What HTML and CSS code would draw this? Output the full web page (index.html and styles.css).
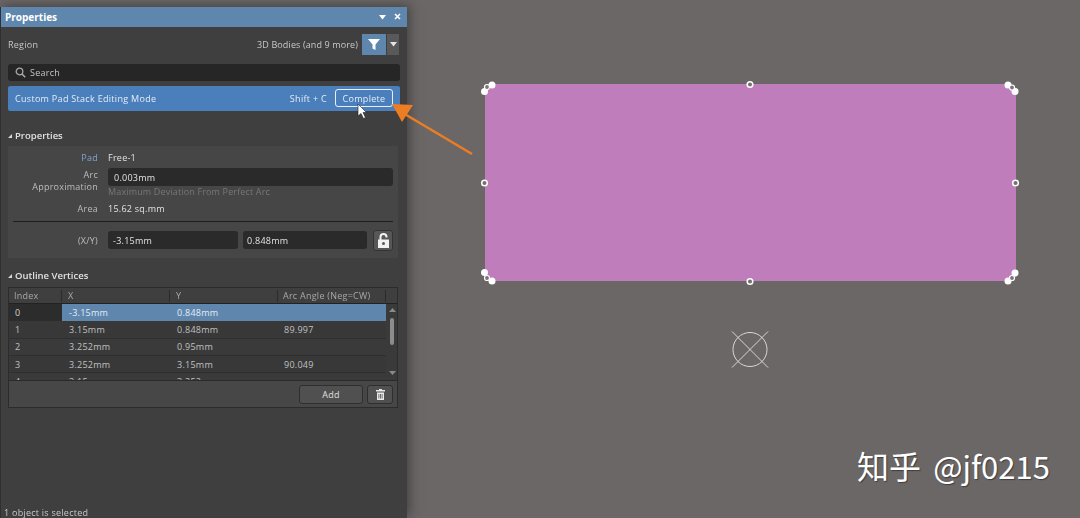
FILE: index.html
```html
<!DOCTYPE html>
<html lang="en">
<head>
<meta charset="utf-8">
<title>Properties</title>
<link rel="stylesheet" href="styles.css">
</head>
<body>
<main class="canvas">
  <div class="pad"></div>
  <svg class="overlay" width="1080" height="518" viewBox="0 0 1080 518">
    <g class="corners">
      <circle cx="492" cy="85" r="3.500"/><circle cx="484.500" cy="91.500" r="3.500"/><circle class="ring" cx="487" cy="87" r="2.500"/>
      <circle cx="1008" cy="85" r="3.500"/><circle cx="1015" cy="91.500" r="3.500"/><circle class="ring" cx="1012" cy="87.500" r="2.500"/>
      <circle cx="484.500" cy="272.500" r="3.500"/><circle cx="492" cy="281" r="3.500"/><circle class="ring" cx="487" cy="278" r="2.500"/>
      <circle cx="1015" cy="273" r="3.500"/><circle cx="1008" cy="281" r="3.500"/><circle class="ring" cx="1012" cy="278" r="2.500"/>
    </g>
    <g class="handles">
      <circle cx="750" cy="84.500" r="2.800"/><circle cx="750" cy="281.500" r="2.800"/>
      <circle cx="484.500" cy="183" r="2.800"/><circle cx="1015.500" cy="183" r="2.800"/>
    </g>
    <g class="origin">
      <circle cx="750" cy="349.500" r="17"/>
      <path d="M732 331.500L768 367.500M768 331.500L732 367.500"/>
    </g>
  </svg>
  <div class="watermark">知乎 <span class="wm-latin">@jf0215</span></div>
</main>

<section class="panel">
  <header class="titlebar">
    <span class="title">Properties</span>
    <span class="window-tools">
      <svg width="7" height="6" viewBox="0 0 7 6"><path d="M0 1h7L3.500 5.500z" fill="#fff"/></svg>
      <svg width="7" height="7" viewBox="0 0 7 7"><path d="M1 1l5 5M6 1l-5 5" stroke="#fff" stroke-width="1.600"/></svg>
    </span>
  </header>

  <div class="region-row">
    <span>Region</span>
    <span class="region-filter">
      <span class="filter-text">3D Bodies (and 9 more)</span>
      <span class="filter-btn"><svg width="12" height="11" viewBox="0 0 12 11"><path d="M0 0h12L7.500 5.500V11L4.500 9.500V5.500z" fill="#fff"/></svg></span>
      <span class="filter-drop"><svg width="7" height="5" viewBox="0 0 7 5"><path d="M0 0h7L3.500 4.500z" fill="#e4e4e4"/></svg></span>
    </span>
  </div>

  <div class="search">
    <svg width="11" height="11" viewBox="0 0 11 11"><circle cx="4.500" cy="4.500" r="3.300" fill="none" stroke="#a8a8a8" stroke-width="1.300"/><path d="M7 7l3.200 3.200" stroke="#a8a8a8" stroke-width="1.600"/></svg>
    <span>Search</span>
  </div>

  <div class="mode-bar">
    <span>Custom Pad Stack Editing Mode</span>
    <span class="mode-right">
      <span>Shift + C</span>
      <span class="complete">Complete</span>
    </span>
  </div>

  <h2 class="section-head"><i class="tri"></i>Properties</h2>
  <div class="props">
    <div class="prop-row pad-row"><span class="label link">Pad</span><span class="value">Free-1</span></div>
    <div class="prop-row arc-row">
      <span class="label two">Arc<br>Approximation</span>
      <div class="field-col">
        <span class="input">0.003mm</span>
        <span class="hint">Maximum Deviation From Perfect Arc</span>
      </div>
    </div>
    <div class="prop-row area-row"><span class="label">Area</span><span class="value">15.62 sq.mm</span></div>
    <div class="divider"></div>
    <div class="prop-row xy-row">
      <span class="label">(X/Y)</span>
      <span class="input x">-3.15mm</span>
      <span class="input y">0.848mm</span>
      <span class="lock"><svg width="11" height="15" viewBox="0 0 11 15"><path d="M2.500 7V4a3 3 0 0 1 6 0v.5" fill="none" stroke="#f2f2f2" stroke-width="2"/><path fill-rule="evenodd" d="M0 6.500h11V15H0zM5.500 9a1.500 1.500 0 1 0 0 3 1.500 1.500 0 0 0 0-3z" fill="#f2f2f2"/></svg></span>
    </div>
  </div>

  <h2 class="section-head outline"><i class="tri"></i>Outline Vertices</h2>
  <div class="table">
    <div class="thead">
      <span class="c0">Index</span><span class="c1">X</span><span class="c2">Y</span><span class="c3">Arc Angle (Neg=CW)</span>
    </div>
    <div class="tbody">
      <div class="rows">
        <div class="row selected"><span class="c0">0</span><span class="c1">-3.15mm</span><span class="c2">0.848mm</span><span class="c3"></span></div>
        <div class="row"><span class="c0">1</span><span class="c1">3.15mm</span><span class="c2">0.848mm</span><span class="c3">89.997</span></div>
        <div class="row"><span class="c0">2</span><span class="c1">3.252mm</span><span class="c2">0.95mm</span><span class="c3"></span></div>
        <div class="row"><span class="c0">3</span><span class="c1">3.252mm</span><span class="c2">3.15mm</span><span class="c3">90.049</span></div>
        <div class="row"><span class="c0">4</span><span class="c1">3.15mm</span><span class="c2">3.252mm</span><span class="c3"></span></div>
      </div>
      <div class="scrollbar">
        <svg class="up" width="7" height="4" viewBox="0 0 7 4"><path d="M0 4h7L3.500 0z" fill="#8a8a8a"/></svg>
        <span class="thumb"></span>
        <svg class="down" width="7" height="4" viewBox="0 0 7 4"><path d="M0 0h7L3.500 4z" fill="#8a8a8a"/></svg>
      </div>
    </div>
    <div class="tfoot">
      <span class="btn add">Add</span>
      <span class="btn trash"><svg width="9" height="11" viewBox="0 0 9 11"><path fill="#e8e8e8" d="M3 0h3v1h3v1.500H0V1h3zM1 3.500h7V11H1zM2.500 5v4.500h.8V5zm1.600 0v4.500h.8V5zm1.600 0v4.500h.8V5z" fill-rule="evenodd"/></svg></span>
    </div>
  </div>

  <div class="status">1 object is selected</div>
</section>

<svg class="pointer" width="1080" height="518" viewBox="0 0 1080 518">
  <path class="arrow-line" d="M472 154L403 113"/>
  <path class="arrow-head" d="M392 104L413 105L402 122z"/>
  <path class="cursor" d="M358 104V116L361 113.500L363.500 118.500L365.500 117.500L363 112.500H366.500z"/>
</svg>
</body>
</html>
```

FILE: styles.css
```css
* { box-sizing: border-box; }
html, body { margin: 0; height: 100%; overflow: hidden; }
body {
  width: 1080px;
  height: 518px;
  position: relative;
  background: #6b6766;
  font-family: "Open Sans", "Noto Sans", sans-serif;
  font-size: 9px;
  letter-spacing: .25px;
  color: #d0d0d0;
}
.canvas { position: absolute; inset: 0; }
.pad {
  position: absolute;
  left: 485px;
  top: 84px;
  width: 531px;
  height: 197px;
  background: #bf7dbb;
  border-radius: 6px;
}
.overlay, .pointer { position: absolute; left: 0; top: 0; }
.handles circle { fill: #77706f; stroke: #fff; stroke-width: 1.500; }
.corners circle { fill: #fff; }
.corners .ring { fill: #7d7478; stroke: #fff; stroke-width: 1.200; }
.origin { fill: none; stroke: #d8d6d6; stroke-width: 1; }
.watermark {
  position: absolute;
  left: 857px;
  top: 444px;
  font-family: "Noto Sans CJK SC", "Noto Sans", sans-serif;
  font-size: 32px;
  line-height: 42px;
  letter-spacing: 0;
  word-spacing: 5px;
  color: #fff;
  white-space: nowrap;
  text-shadow: 1px 1px 1px #3f3f3f;
}
.wm-latin { font-size: 31px; }

.panel {
  position: absolute;
  left: 0;
  top: 7px;
  width: 407px;
  height: 511px;
  background: #3f3f3f;
  border-left: 1px solid #303030;
  box-shadow: 3px -2px 10px rgba(40, 40, 40, .55);
  display: flex;
  flex-direction: column;
  filter: blur(.3px);
}
.titlebar {
  height: 20px;
  flex: none;
  background: #5f87ae;
  padding: 0 6px 1px 4px;
  display: flex;
  align-items: center;
  justify-content: space-between;
}
.title { color: #fff; font-size: 10px; font-weight: 700; letter-spacing: 0; }
.window-tools { display: flex; gap: 8px; align-items: center; }

.region-row {
  margin-top: 7px;
  height: 21px;
  padding: 0 8px 0 7px;
  display: flex;
  align-items: center;
  justify-content: space-between;
  color: #c8c8c8;
}
.region-filter { display: flex; align-items: center; }
.filter-text { letter-spacing: .12px; }
.filter-btn {
  margin-left: 4px;
  width: 24px;
  height: 21px;
  background: #5f87ae;
  display: flex;
  align-items: center;
  justify-content: center;
}
.filter-drop {
  margin-left: 1px;
  width: 12px;
  height: 21px;
  background: #595959;
  display: flex;
  align-items: center;
  justify-content: center;
}
.search {
  margin: 9px 7px 0 7px;
  height: 17px;
  background: #262626;
  border-radius: 3px;
  padding-left: 7px;
  display: flex;
  align-items: center;
  gap: 4px;
  color: #c4c4c4;
}
.mode-bar {
  margin: 5px 7px 0 7px;
  height: 25px;
  background: #4a7fbc;
  border-radius: 2px;
  padding: 0 7px;
  display: flex;
  align-items: center;
  justify-content: space-between;
  color: #e4ecf5;
  letter-spacing: .3px;
}
.mode-right { display: flex; align-items: center; gap: 8px; }
.complete {
  width: 58px;
  height: 18px;
  border: 1px solid #e6eef7;
  border-radius: 3px;
  display: flex;
  align-items: center;
  justify-content: center;
  margin-top: -1px;
}
.section-head {
  margin: 19px 0 0 7px;
  height: 12px;
  font-size: 9.500px;
  font-weight: 600;
  letter-spacing: 0;
  color: #e2e2e2;
  line-height: 12px;
  display: flex;
  align-items: center;
  gap: 3px;
}
.section-head.outline { margin-top: 12px; }
.tri {
  width: 0;
  height: 0;
  border-left: 4px solid transparent;
  border-bottom: 4px solid #d8d8d8;
}
.props {
  margin: 4px 9px 0 7px;
  height: 112px;
  background: #464646;
  padding-right: 5px;
  display: flex;
  flex-direction: column;
}
.prop-row { display: flex; align-items: center; }
.label { width: 90px; flex: none; text-align: right; color: #bdbdbd; }
.label.link { color: #7ea5cf; }
.label.two { line-height: 12px; }
.value { margin-left: 10px; color: #e2e2e2; }
.pad-row { height: 22px; }
.arc-row { height: 33px; align-items: flex-start; }
.arc-row .label { margin-top: 1px; }
.field-col { margin-left: 10px; flex: 1; display: flex; flex-direction: column; }
.input {
  height: 18px;
  background: #2a2a2a;
  border-radius: 3px;
  padding-left: 5px;
  display: flex;
  align-items: center;
  color: #e2e2e2;
}
.field-col .input { padding-left: 6px; }
.hint { height: 12px; color: #777; line-height: 12px; letter-spacing: .15px; }
.area-row { height: 15px; }
.divider { height: 1px; margin: 5px 0 0 5px; background: #1e1e1e; }
.xy-row { margin-top: 7px; height: 22px; }
.xy-row .input.x { margin-left: 10px; width: 130px; }
.xy-row .input.y { margin-left: 5px; width: 124px; padding-left: 4px; }
.lock {
  margin-left: 6px;
  width: 20px;
  height: 21px;
  background: #575757;
  border: 1px solid #333;
  border-radius: 3px;
  display: flex;
  align-items: center;
  justify-content: center;
}
.table {
  margin: 5px 9px 0 7px;
  height: 121px;
  border: 1px solid #2c2c2c;
  background: #474747;
  display: flex;
  flex-direction: column;
}
.thead {
  height: 16px;
  flex: none;
  background: #3f3f3f;
  border-bottom: 1px solid #222;
  display: flex;
  align-items: center;
  color: #a8a8a8;
}
.thead span { height: 12px; display: flex; align-items: center; border-right: 1px solid #2b2b2b; }
.c0, .c1, .c2, .c3 { flex: none; }
.c0 { width: 53px; padding-left: 5px; }
.c1 { width: 108px; padding-left: 6px; }
.c2 { width: 108px; padding-left: 6px; }
.c3 { width: 108px; padding-left: 5px; }
.tbody { height: 76px; flex: none; display: flex; overflow: hidden; background: #363636; }
.rows { width: 377px; flex: none; }
.row {
  height: 17.300px;
  display: flex;
  align-items: center;
  background: #383838;
  border-bottom: 1px solid #2f2f2f;
  color: #c0c0c0;
}
.row .c0 { padding-left: 6px; }
.row .c1, .row .c2 { padding-left: 7px; }
.row .c3 { padding-left: 6px; }
.row.selected { background: #5f87ae; color: #e4ecf5; border-bottom: 0; }
.row.selected .c0 { background: #2c2c2c; color: #d0d0d0; align-self: stretch; display: flex; align-items: center; }
.row:nth-child(odd):not(.selected) { background: #3a3a3a; }
.scrollbar {
  flex: 1;
  position: relative;
  background: #3a3a3a;
}
.scrollbar .up { position: absolute; left: 3px; top: 4px; }
.scrollbar .down { position: absolute; left: 3px; top: 67px; }
.thumb {
  position: absolute;
  left: 4px;
  top: 14px;
  width: 4px;
  height: 27px;
  border-radius: 2px;
  background: #8c8c8c;
}
.tfoot {
  flex: 1;
  border-top: 1px solid #2a2a2a;
  display: flex;
  align-items: center;
  justify-content: flex-end;
  gap: 4px;
  padding-right: 4px;
}
.btn {
  height: 19px;
  background: #505050;
  border: 1px solid #2e2e2e;
  border-radius: 3px;
  display: flex;
  align-items: center;
  justify-content: center;
  color: #e0e0e0;
}
.btn.add { width: 64px; }
.btn.trash { width: 26px; }
.status {
  margin-top: auto;
  padding-left: 3px;
  height: 11px;
  line-height: 11px;
  color: #c8c8c8;
}
.pointer { pointer-events: none; }
.arrow-line { stroke: #ed7d22; stroke-width: 2.500; fill: none; }
.arrow-head { fill: #ed7d22; }
.cursor { fill: #fff; stroke: #222; stroke-width: .6; }
```
